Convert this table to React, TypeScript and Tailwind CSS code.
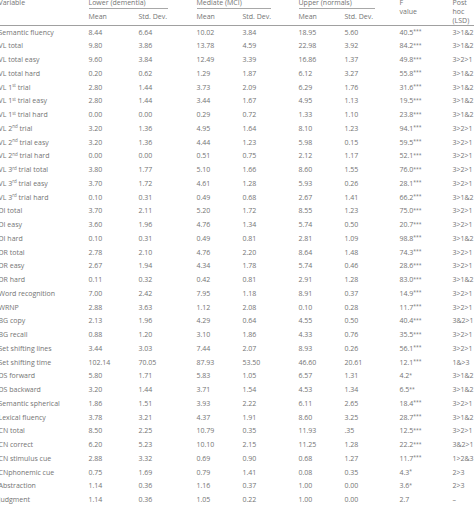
import type { ReactNode } from 'react'

type Row = {
  label: ReactNode
  v: string[]
  f: string
  stars: string
  post: string
}

const th = (n: string, sup: string, rest: string) => (
  <>
    VL {n}
    <span className="relative -top-[2.5px] text-[4.5px]">{sup}</span> {rest}
  </>
)

const rows: Row[] = [
  { label: 'Semantic fluency', v: ['8.44', '6.64', '10.02', '3.84', '18.95', '5.60'], f: '40.5', stars: '***', post: '3>1&2' },
  { label: 'VL total', v: ['9.80', '3.86', '13.78', '4.59', '22.98', '3.92'], f: '84.2', stars: '***', post: '3>1&2' },
  { label: 'VL total easy', v: ['9.60', '3.84', '12.49', '3.39', '16.86', '1.37'], f: '49.8', stars: '***', post: '3>2>1' },
  { label: 'VL total hard', v: ['0.20', '0.62', '1.29', '1.87', '6.12', '3.27'], f: '55.8', stars: '***', post: '3>1&2' },
  { label: th('1', 'st', 'trial'), v: ['2.80', '1.44', '3.73', '2.09', '6.29', '1.76'], f: '31.6', stars: '***', post: '3>1&2' },
  { label: th('1', 'st', 'trial easy'), v: ['2.80', '1.44', '3.44', '1.67', '4.95', '1.13'], f: '19.5', stars: '***', post: '3>1&2' },
  { label: th('1', 'st', 'trial hard'), v: ['0.00', '0.00', '0.29', '0.72', '1.33', '1.10'], f: '23.8', stars: '***', post: '3>1&2' },
  { label: th('2', 'nd', 'trial'), v: ['3.20', '1.36', '4.95', '1.64', '8.10', '1.23'], f: '94.1', stars: '***', post: '3>2>1' },
  { label: th('2', 'nd', 'trial easy'), v: ['3.20', '1.36', '4.44', '1.23', '5.98', '0.15'], f: '59.5', stars: '***', post: '3>2>1' },
  { label: th('2', 'nd', 'trial hard'), v: ['0.00', '0.00', '0.51', '0.75', '2.12', '1.17'], f: '52.1', stars: '***', post: '3>2>1' },
  { label: th('3', 'rd', 'trial total'), v: ['3.80', '1.77', '5.10', '1.66', '8.60', '1.55'], f: '76.0', stars: '***', post: '3>2>1' },
  { label: th('3', 'rd', 'trial easy'), v: ['3.70', '1.72', '4.61', '1.28', '5.93', '0.26'], f: '28.1', stars: '***', post: '3>2>1' },
  { label: th('3', 'rd', 'trial hard'), v: ['0.10', '0.31', '0.49', '0.68', '2.67', '1.41'], f: '66.2', stars: '***', post: '3>1&2' },
  { label: 'DI total', v: ['3.70', '2.11', '5.20', '1.72', '8.55', '1.23'], f: '75.0', stars: '***', post: '3>2>1' },
  { label: 'DI easy', v: ['3.60', '1.96', '4.76', '1.34', '5.74', '0.50'], f: '20.7', stars: '***', post: '3>2>1' },
  { label: 'DI hard', v: ['0.10', '0.31', '0.49', '0.81', '2.81', '1.09'], f: '98.8', stars: '***', post: '3>1&2' },
  { label: 'DR total', v: ['2.78', '2.10', '4.76', '2.20', '8.64', '1.48'], f: '74.3', stars: '***', post: '3>2>1' },
  { label: 'DR easy', v: ['2.67', '1.94', '4.34', '1.78', '5.74', '0.46'], f: '28.6', stars: '***', post: '3>2>1' },
  { label: 'DR hard', v: ['0.11', '0.32', '0.42', '0.81', '2.91', '1.28'], f: '83.0', stars: '***', post: '3>1&2' },
  { label: 'Word recognition', v: ['7.00', '2.42', '7.95', '1.18', '8.91', '0.37'], f: '14.9', stars: '***', post: '3>2>1' },
  { label: 'WRNP', v: ['2.88', '3.63', '1.12', '2.08', '0.10', '0.28'], f: '11.7', stars: '***', post: '3>2>1' },
  { label: 'BG copy', v: ['2.13', '1.96', '4.29', '0.64', '4.55', '0.50'], f: '40.4', stars: '***', post: '3&2>1' },
  { label: 'BG recall', v: ['0.88', '1.20', '3.10', '1.86', '4.33', '0.76'], f: '35.5', stars: '***', post: '3>2>1' },
  { label: 'Set shifting lines', v: ['3.44', '3.03', '7.44', '2.07', '8.93', '0.26'], f: '56.1', stars: '***', post: '3>2>1' },
  { label: 'Set shifting time', v: ['102.14', '70.05', '87.93', '53.50', '46.60', '20.61'], f: '12.1', stars: '***', post: '1&>3' },
  { label: 'DS forward', v: ['5.80', '1.71', '5.83', '1.05', '6.57', '1.31'], f: '4.2', stars: '*', post: '3>1&2' },
  { label: 'DS backward', v: ['3.20', '1.44', '3.71', '1.54', '4.53', '1.34'], f: '6.5', stars: '**', post: '3>1&2' },
  { label: 'Semantic spherical', v: ['1.86', '1.51', '3.93', '2.22', '6.11', '2.65'], f: '18.4', stars: '***', post: '3>2>1' },
  { label: 'Lexical fluency', v: ['3.78', '3.21', '4.37', '1.91', '8.60', '3.25'], f: '28.7', stars: '***', post: '3>1&2' },
  { label: 'CN total', v: ['8.50', '2.25', '10.79', '0.35', '11.93', '.35'], f: '12.5', stars: '***', post: '3>2>1' },
  { label: 'CN correct', v: ['6.20', '5.23', '10.10', '2.15', '11.25', '1.28'], f: '22.2', stars: '***', post: '3&2>1' },
  { label: 'CN stimulus cue', v: ['2.88', '3.32', '0.69', '0.90', '0.68', '1.27'], f: '11.7', stars: '***', post: '1>2&3' },
  { label: 'CNphonemic cue', v: ['0.75', '1.69', '0.79', '1.41', '0.08', '0.35'], f: '4.3', stars: '*', post: '2>3' },
  { label: 'Abstraction', v: ['1.14', '0.36', '1.16', '0.37', '1.00', '0.00'], f: '3.6', stars: '*', post: '2>3' },
  { label: 'Judgment', v: ['1.14', '0.36', '1.05', '0.22', '1.00', '0.00'], f: '2.7', stars: '', post: '–' },
]

const cols = 'grid grid-cols-[90px_50px_58px_46px_56px_46px_55px_53px_70px]'

function Group({ title, width, gap, sub }: { title: string; width: string; gap: string; sub: string }) {
  return (
    <div className={`col-span-2 flex flex-col ${gap}`}>
      <div className={`h-[9.5px] border-b border-[#a8a8a8] leading-[6px] ${width}`}>{title}</div>
      <div className={`grid ${sub} mt-[3px] leading-[9px]`}>
        <span>Mean</span>
        <span>Std. Dev.</span>
      </div>
    </div>
  )
}

export default function App() {
  return (
    <div className="w-[474px] h-[506px] overflow-hidden bg-white text-[7px] text-[#747474] font-['Open_Sans',sans-serif]">
      <div className="-ml-[1.5px] w-[520px] whitespace-nowrap">
        {/* Header */}
        <div className={`${cols} h-[26.5px] border-b border-[#a0a0a0] -mt-[0.5px]`}>
          <div className="leading-[6px]">Variable</div>
          <Group title="Lower (dementia)" width="w-[79px]" gap="mr-[29px]" sub="grid-cols-[50px_1fr]" />
          <Group title="Mediate (MCI)" width="w-[74px]" gap="mr-[28px]" sub="grid-cols-[46px_1fr]" />
          <Group title="Upper (normals)" width="w-[76px]" gap="mr-[25px]" sub="grid-cols-[46px_1fr]" />
          <div className="flex flex-col leading-[9px] -mt-[1.5px]">
            <span>F</span>
            <span>value</span>
          </div>
          <div className="flex flex-col leading-[9px] -mt-[1.5px]">
            <span>Post</span>
            <span>hoc</span>
            <span>(LSD)</span>
          </div>
        </div>

        {/* Body */}
        {rows.map((r, i) => (
          <div key={i} className={`${cols} h-[13.765px] items-center`}>
            <div>{r.label}</div>
            {r.v.map((x, j) => (
              <div key={j}>{x}</div>
            ))}
            <div>
              {r.f}
              {r.stars && <span className="relative -top-[1.5px] text-[5px]">{r.stars}</span>}
            </div>
            <div>{r.post}</div>
          </div>
        ))}
      </div>
    </div>
  )
}
